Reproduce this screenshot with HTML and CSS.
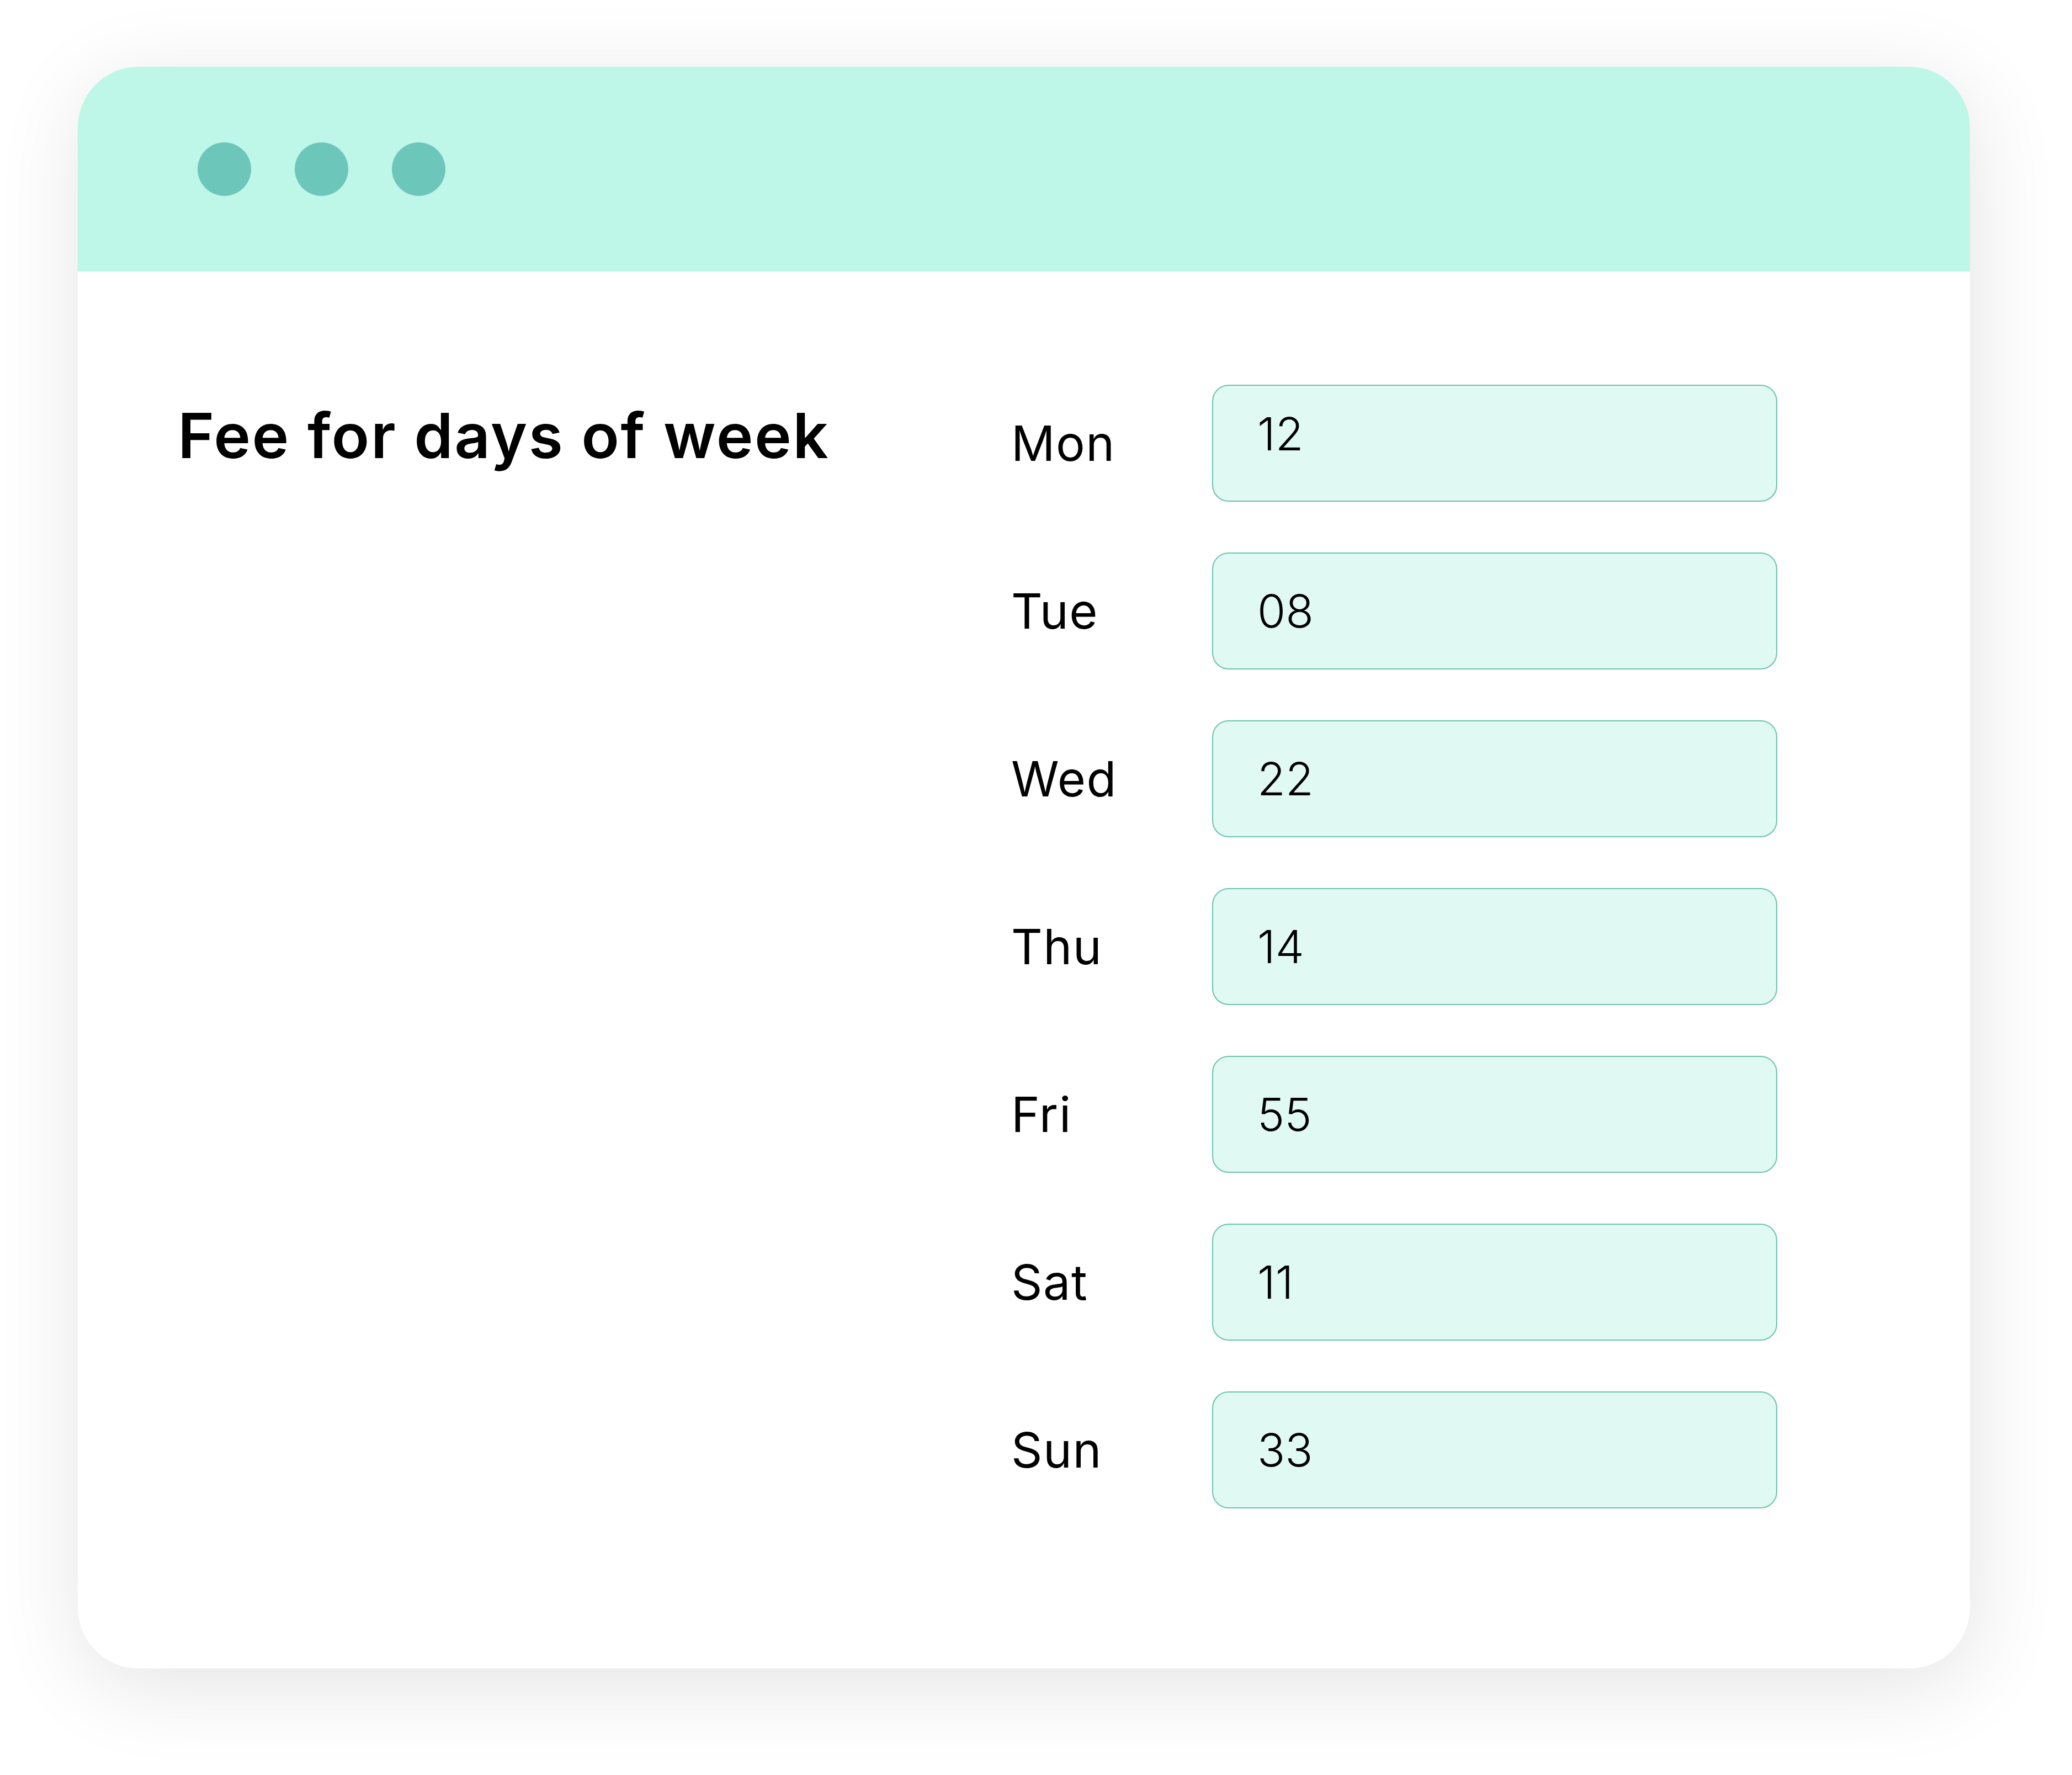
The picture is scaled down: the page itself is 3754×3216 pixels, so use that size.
FILE: index.html
```html
<!DOCTYPE html>
<html lang="en">
<head>
<meta charset="utf-8">
<title>Fee for days of week</title>
<link rel="stylesheet" href="styles.css">
</head>
<body>
<div class="page">
  <div class="window">
    <div class="titlebar">
      <span class="dot"></span>
      <span class="dot"></span>
      <span class="dot"></span>
    </div>
    <div class="content">
      <h1 class="title">Fee for days of week</h1>
      <div class="form">
        <div class="row"><span class="label">Mon</span><div class="field field-raised">12</div></div>
        <div class="row"><span class="label">Tue</span><div class="field">08</div></div>
        <div class="row"><span class="label">Wed</span><div class="field">22</div></div>
        <div class="row"><span class="label">Thu</span><div class="field">14</div></div>
        <div class="row"><span class="label">Fri</span><div class="field">55</div></div>
        <div class="row"><span class="label">Sat</span><div class="field">11</div></div>
        <div class="row"><span class="label">Sun</span><div class="field">33</div></div>
      </div>
    </div>
  </div>
</div>
</body>
</html>
```
FILE: styles.css
```css
html, body {
  margin: 0;
  padding: 0;
  background: #ffffff;
}

body {
  font-family: Inter, "Noto Sans", sans-serif;
  color: #000000;
}

.page {
  padding: 121px 185px 194px 141px;
  width: 3428px;
}

.window {
  width: 3428px;
  background: #ffffff;
  border-radius: 110px;
  box-shadow: 6px 30px 160px rgba(0, 0, 0, 0.11);
  overflow: hidden;
}

.titlebar {
  height: 371px;
  background: #bef6e8;
  display: flex;
  align-items: center;
  gap: 79px;
  padding-left: 217px;
  box-sizing: border-box;
}

.dot {
  width: 97px;
  height: 97px;
  border-radius: 50%;
  background: #6dc6ba;
}

.content {
  display: flex;
  align-items: flex-start;
  padding: 205px 349px 290px 181px;
}

.title {
  margin: 36px 0 0 0;
  width: 1517px;
  flex-shrink: 0;
  font-size: 113px;
  line-height: 1;
  font-weight: 600;
  letter-spacing: 2.5px;
  white-space: nowrap;
}

.form {
  display: flex;
  flex-direction: column;
  gap: 92px;
}

.row {
  display: flex;
  align-items: center;
}

.label {
  width: 357px;
  margin-left: -7px;
  margin-right: 7px;
  font-size: 88px;
  line-height: 1;
  font-weight: 400;
  letter-spacing: 1.5px;
}

.field {
  width: 1024px;
  height: 212px;
  box-sizing: border-box;
  background: #e0f9f2;
  border: 2px solid #6cc4ac;
  border-radius: 30px;
  padding-left: 80px;
  display: flex;
  align-items: center;
  font-size: 83px;
  line-height: 1;
  font-weight: 300;
}

.field-raised {
  padding-bottom: 34px;
}
```
